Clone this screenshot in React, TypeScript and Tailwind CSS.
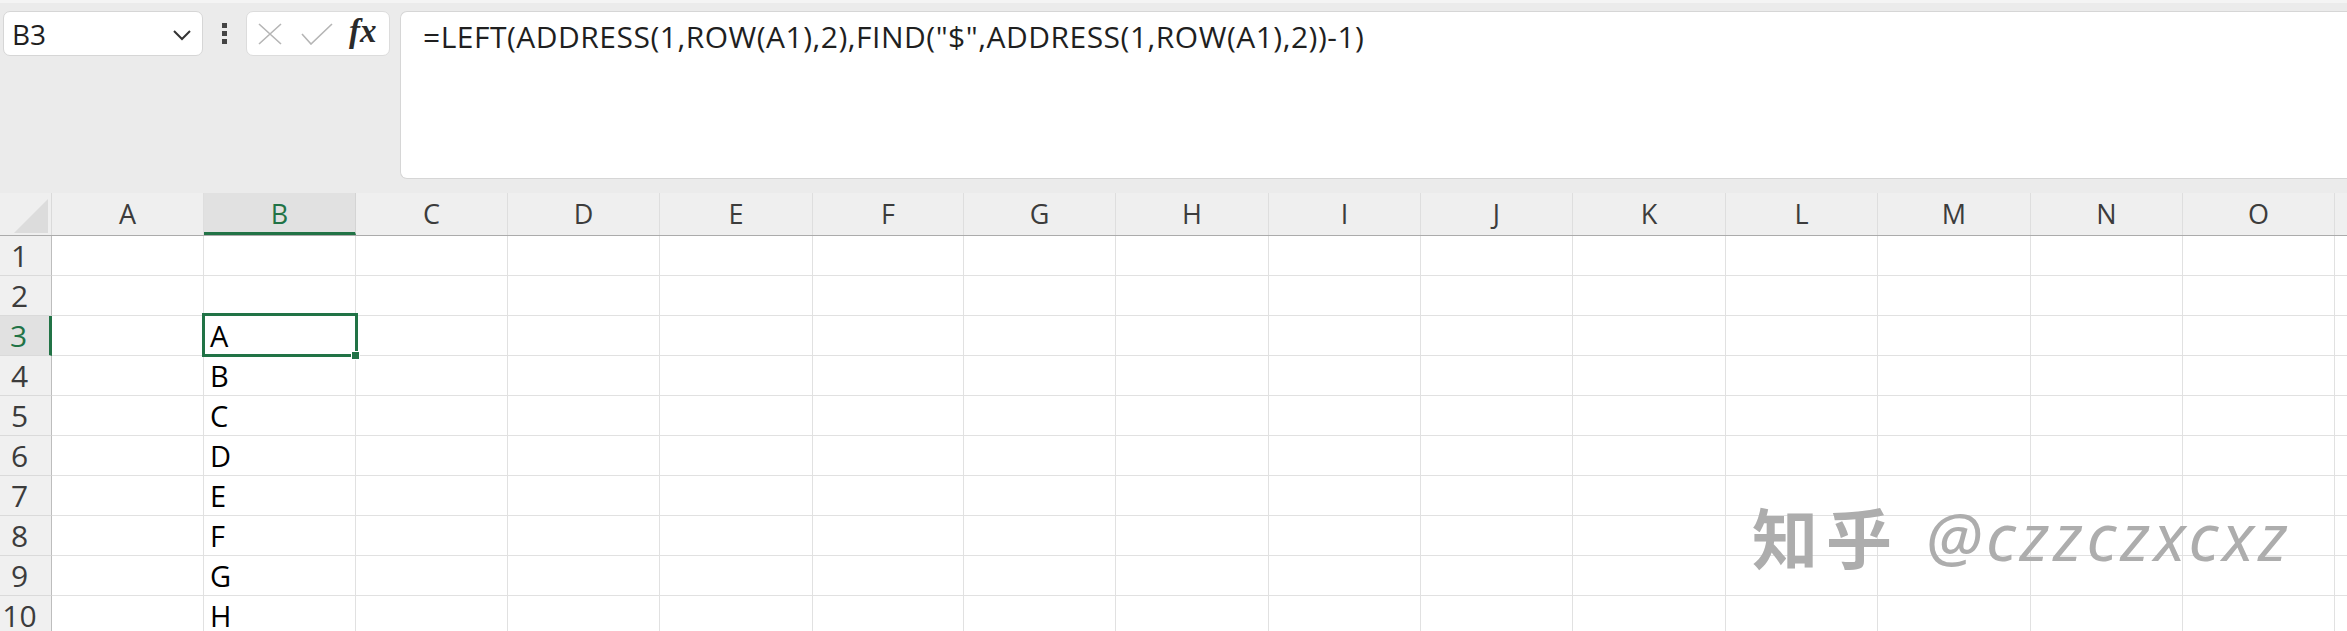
import React from "react";

const cols = ["A", "B", "C", "D", "E", "F", "G", "H", "I", "J", "K", "L", "M", "N", "O", ""];
const widths = [152, 152, 152, 152, 153, 151, 152, 153, 152, 152, 153, 152, 153, 152, 152, 40];
const cellData: Record<number, string> = { 3: "A", 4: "B", 5: "C", 6: "D", 7: "E", 8: "F", 9: "G", 10: "H" };
const rows = [1, 2, 3, 4, 5, 6, 7, 8, 9, 10];

export default function App() {
  return (
    <div className="relative w-[2347px] h-[631px] overflow-hidden bg-[#ebebeb] font-['Open_Sans',sans-serif]">
      {/* Toolbar / formula bar */}
      <div className="h-[3px] bg-[#f4f4f4]" />
      <div className="h-[190px] flex items-start pt-[8px] pl-[3px]">
        {/* Name box */}
        <div className="w-[200px] h-[45px] bg-white border border-[#d6d6d6] rounded-[7px] flex items-center justify-between pl-[8px] pr-[10px]">
          <span className="text-[28px] leading-none text-[#1f1f1f]">B3</span>
          <svg width="20" height="12" viewBox="0 0 20 12" className="mt-[2px]">
            <path d="M2 2 L10 10 L18 2" fill="none" stroke="#333" strokeWidth="2" />
          </svg>
        </div>
        {/* Dots */}
        <div className="w-[43px] h-[45px] flex flex-col items-center justify-center gap-[3px]">
          <div className="w-[5px] h-[5px] bg-[#444]" />
          <div className="w-[5px] h-[5px] bg-[#444]" />
          <div className="w-[5px] h-[5px] bg-[#444]" />
        </div>
        {/* Buttons */}
        <div className="w-[144px] h-[45px] bg-white border border-[#dcdcdc] rounded-[7px] flex items-center pl-[10px] pr-[8px] gap-[18px]">
          <svg width="26" height="22" viewBox="0 0 26 22">
            <path d="M2 1 L24 21 M24 1 L2 21" fill="none" stroke="#b5b5b5" strokeWidth="1.6" />
          </svg>
          <svg width="32" height="22" viewBox="0 0 32 22">
            <path d="M1 11 L10 21 L31 1" fill="none" stroke="#b5b5b5" strokeWidth="1.6" />
          </svg>
          <span className="font-['Liberation_Serif',serif] italic font-bold text-[33px] leading-none text-[#2a2a2a] -mt-[4px] -ml-[2px]">fx</span>
        </div>
        {/* Formula box */}
        <div className="ml-[10px] flex-1 h-[168px] bg-white border border-[#d6d6d6] rounded-l-[7px] border-r-0 pl-[22px] pt-[4px]">
          <span className="text-[30px] leading-[42px] text-[#1f1f1f] tracking-[0.5px]">
            =LEFT(ADDRESS(1,ROW(A1),2),FIND("$",ADDRESS(1,ROW(A1),2))-1)
          </span>
        </div>
      </div>

      {/* Grid */}
      <div className="relative bg-white">
        {/* Column headers */}
        <div className="flex h-[43px] bg-[#efefef] border-b border-[#ababab]">
          <div className="w-[52px] shrink-0 relative border-r border-[#dadada]">
            <svg width="34" height="34" viewBox="0 0 34 34" className="absolute left-[14px] top-[6px]">
              <path d="M34 0 L34 34 L0 34 Z" fill="#dcdcdc" />
            </svg>
          </div>
          {cols.map((c, i) => (
            <div
              key={i}
              style={{ width: widths[i] }}
              className={
                "shrink-0 flex items-center justify-center text-[27px] border-r " +
                (c === "B"
                  ? "bg-[#e1e1e1] text-[#217346] border-[#d4d4d4] border-b-[3px] border-b-[#217346] pt-[3px]"
                  : "text-[#3c3c3c] border-[#dedede]")
              }
            >
              {c}
            </div>
          ))}
        </div>
        {/* Rows */}
        {rows.map((r) => (
          <div key={r} className="flex h-[40px]">
            <div
              className={
                "w-[52px] shrink-0 border-b border-[#dadada] flex items-center justify-center pr-[12px] text-[30px] " +
                (r === 3
                  ? "bg-[#e1e1e1] text-[#217346] border-r-[3px] border-r-[#217346]"
                  : "bg-[#f0f0f0] text-[#3c3c3c] border-r border-r-[#bdbdbd]")
              }
            >
              {r}
            </div>
            {cols.map((c, i) => (
              <div
                key={i}
                style={{ width: widths[i] }}
                className="shrink-0 border-r border-b border-[#e1e1e1] flex items-center pl-[6px] text-[29px] text-black"
              >
                {c === "B" ? cellData[r] ?? "" : ""}
              </div>
            ))}
          </div>
        ))}
        {/* Selection */}
        <div className="absolute left-[202px] top-[120px] w-[156px] h-[44px] border-[3px] border-[#217346]" />
        <div className="absolute left-[351px] top-[158px] w-[9px] h-[9px] bg-[#217346] border border-white" />
      </div>

      {/* Watermark */}
      <div className="absolute left-[1752px] top-[502px] flex items-center gap-[26px] text-[#adadad] select-none">
        <span className="font-['Noto_Sans_CJK_SC',sans-serif] font-bold text-[66px] leading-none tracking-[8px]">知乎</span>
        <span className="font-['Noto_Sans',sans-serif] italic text-[66px] leading-none tracking-[4px]">@czzczxcxz</span>
      </div>
    </div>
  );
}
